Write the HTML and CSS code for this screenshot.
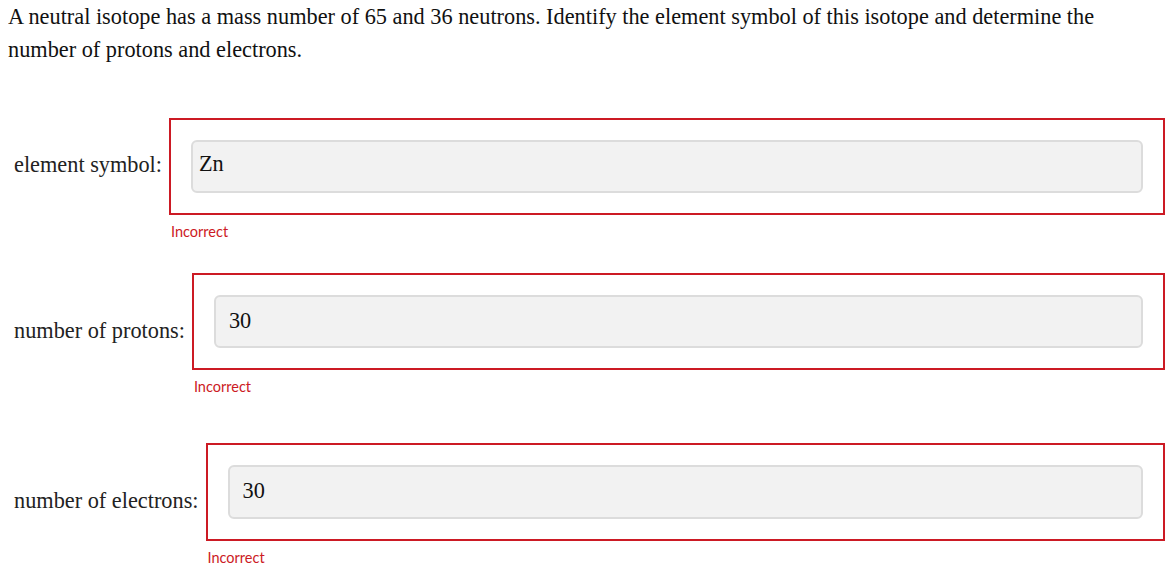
FILE: index.html
```html
<!DOCTYPE html>
<html lang="en">
<head>
  <meta charset="UTF-8">
  <meta name="viewport" content="width=device-width, initial-scale=1.0">
  <title>Isotope Question</title>
  <link rel="stylesheet" href="styles.css">
</head>
<body>
  <p class="question">A neutral isotope has a mass number of 65 and 36 neutrons. Identify the element symbol of this isotope and determine the number of protons and electrons.</p>

  <div class="answers">
    <div class="answer-row first">
      <label class="answer-label" for="symbol">element symbol:</label>
      <div class="answer-field">
        <div class="answer-box">
          <input id="symbol" class="answer-input text" type="text" value="Zn">
        </div>
        <div class="feedback">Incorrect</div>
      </div>
    </div>

    <div class="answer-row">
      <label class="answer-label" for="protons">number of protons:</label>
      <div class="answer-field">
        <div class="answer-box">
          <input id="protons" class="answer-input" type="text" value="30">
        </div>
        <div class="feedback">Incorrect</div>
      </div>
    </div>

    <div class="answer-row last">
      <label class="answer-label" for="electrons">number of electrons:</label>
      <div class="answer-field">
        <div class="answer-box">
          <input id="electrons" class="answer-input" type="text" value="30">
        </div>
        <div class="feedback">Incorrect</div>
      </div>
    </div>
  </div>
</body>
</html>
```

FILE: styles.css
```css
* { box-sizing: border-box; }
body {
  margin: 0 8px;
  background: #fff;
  color: #111;
  font-family: "Liberation Serif", "Times New Roman", serif;
  font-size: 22.3px;
}

.question {
  margin: 0;
  line-height: 33px;
}

.answers {
  display: flex;
  flex-direction: column;
  margin-top: 52px;
  padding-left: 6px;
}

.answer-row {
  display: flex;
  align-items: flex-start;
  gap: 7px;
  margin-top: 33px;
}
.answer-row.first { margin-top: 0; }
.answer-row.last { margin-top: 48px; }

.answer-label {
  padding-top: 45px;
  white-space: nowrap;
  color: #222;
}
.first .answer-label { padding-top: 34px; }

.answer-field {
  flex: 1;
}

.answer-box {
  border: 2px solid #cc1a24;
  padding: 20px;
}

.answer-input {
  display: block;
  width: 100%;
  height: 53px;
  border: 2px solid #dcdcdc;
  border-radius: 6px;
  background: #f2f2f2;
  font-family: inherit;
  font-size: 22.3px;
  color: #111;
  padding: 0 12px 2px 13px;
}
.answer-input.text { padding-left: 6px; padding-bottom: 6px; }
.last .answer-input { height: 54px; }

.feedback {
  margin-top: 8px;
  padding-left: 2px;
  color: #cc1a24;
  font-family: Lato, "Open Sans", sans-serif;
  font-size: 14.5px;
}
```
